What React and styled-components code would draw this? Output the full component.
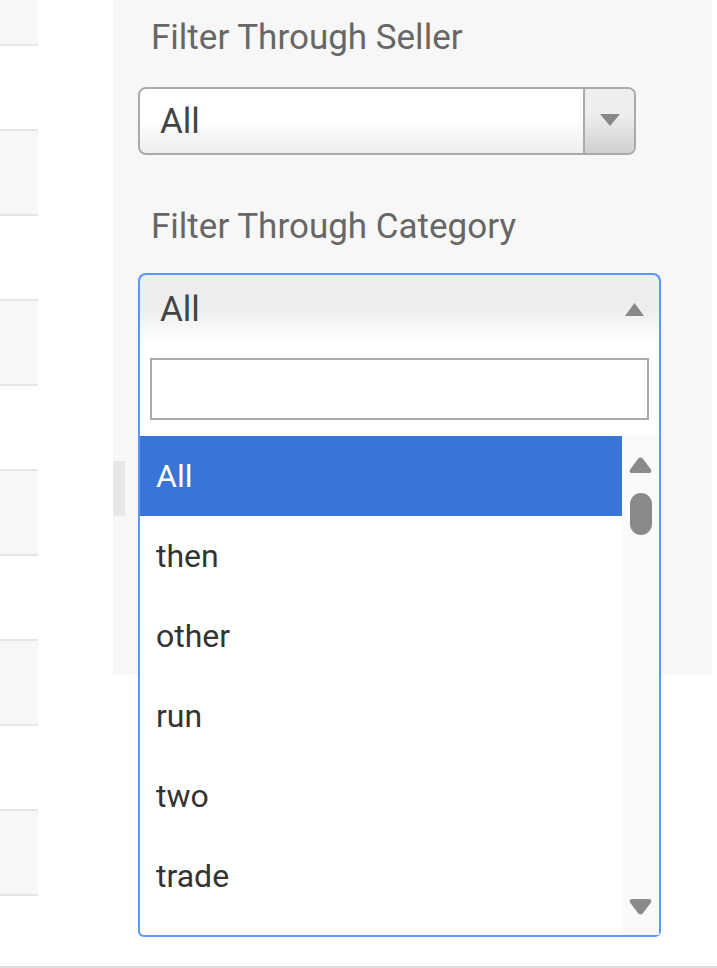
import React from "react";
import styled, { createGlobalStyle } from "styled-components";

const Global = createGlobalStyle`
  html, body { margin: 0; padding: 0; background: #fff; }
  body { font-family: Roboto, "Liberation Sans", Arial, sans-serif; }
  * { box-sizing: border-box; }
`;

const Page = styled.div`
  position: relative;
  width: 717px;
  height: 968px;
  overflow: hidden;
  border-bottom: 2px solid #dedede;
  display: flex;
  align-items: flex-start;
`;

const Strip = styled.div`
  width: 38px;
  display: flex;
  flex-direction: column;
  flex-shrink: 0;
`;

const StripRow = styled.div`
  height: ${(p) => (p.$first ? 46 : 85)}px;
  background: ${(p) => (p.$striped ? "#f7f7f7" : "#fff")};
  border-bottom: 2px solid #e6e6e6;
`;

const Panel = styled.div`
  margin-left: 75px;
  width: 599px;
  height: 675px;
  background: #f7f7f7;
  padding: 18px 0 0 25px;
  display: flex;
  flex-direction: column;
  align-items: flex-start;
`;

const Label = styled.div`
  margin: ${(p) => p.$top || 0}px 0 0 13px;
  font-size: 35px;
  line-height: 40px;
  color: #676767;
`;

const SellerSelect = styled.div`
  margin-top: 29px;
  width: 498px;
  height: 68px;
  border: 2px solid #aaa;
  border-radius: 8px;
  display: flex;
  overflow: hidden;
  background: linear-gradient(to top, #ededed 0%, #fff 50%);
`;

const Value = styled.div`
  flex: 1;
  display: flex;
  align-items: center;
  padding-left: 20px;
  font-size: 35px;
  color: #444;
`;

const ArrowBox = styled.div`
  width: 51px;
  border-left: 2px solid #aaa;
  background: linear-gradient(to top, #d0d0d0 0%, #eee 60%);
  display: flex;
  align-items: center;
  justify-content: center;
  padding-bottom: 2px;
`;

const CategoryWrap = styled.div`
  position: relative;
  margin-top: 26px;
  width: 523px;
`;

const OpenHeader = styled.div`
  height: 70px;
  border: 2px solid #5897fb;
  border-bottom: none;
  border-radius: 8px 8px 0 0;
  background: linear-gradient(to top, #fff 0%, #eee 50%);
  display: flex;
  align-items: center;
  padding-right: 15px;
`;

const Drop = styled.div`
  position: absolute;
  top: 100%;
  left: 0;
  width: 523px;
  background: #fff;
  border: 2px solid #5897fb;
  border-top: none;
  border-radius: 0 0 6px 6px;
  padding-top: 15px;
  z-index: 2;
`;

const Search = styled.div`
  margin: 0 10px;
  height: 62px;
  border: 2px solid #aaa;
  background: #fff;
`;

const List = styled.div`
  margin-top: 16px;
  height: 499px;
  display: flex;
  overflow: hidden;
`;

const Items = styled.div`
  flex: 1;
  display: flex;
  flex-direction: column;
`;

const Item = styled.div`
  height: 80px;
  flex-shrink: 0;
  display: flex;
  align-items: center;
  padding-left: 16px;
  font-size: 32px;
  color: ${(p) => (p.$active ? "#fff" : "#333")};
  background: ${(p) => (p.$active ? "#3875d7" : "transparent")};
`;

const Track = styled.div`
  width: 37px;
  background: #fafafa;
  display: flex;
  flex-direction: column;
  align-items: center;
  padding: 21px 0 20px;
`;

const Thumb = styled.div`
  margin-top: 20px;
  width: 22px;
  height: 42px;
  border-radius: 11px;
  background: #8a8a8a;
`;

const Spacer = styled.div`
  flex: 1;
`;

const Notch = styled.div`
  margin: 118px 0 0 -25px;
  width: 12px;
  height: 55px;
  background: #e8e8e8;
`;

const Tri = ({ dir = "down", w = 20, h = 12, color = "#888" }) => (
  <svg width={w} height={h} viewBox={`0 0 ${w} ${h}`} style={{ display: "block" }}>
    {dir === "down" ? (
      <path d={`M0 0 H${w} L${w / 2} ${h} Z`} fill={color} />
    ) : (
      <path d={`M0 ${h} H${w} L${w / 2} 0 Z`} fill={color} />
    )}
  </svg>
);

const RoundTri = ({ dir = "up" }) => (
  <svg width="23" height="16" viewBox="0 0 23 16" style={{ display: "block" }}>
    {dir === "up" ? (
      <path
        d="M9.3 1.6 Q11.5 -0.6 13.7 1.6 L21.8 12.2 Q23.6 16 19.5 16 H3.5 Q-0.6 16 1.2 12.2 Z"
        fill="#8a8a8a"
      />
    ) : (
      <path
        d="M9.3 14.4 Q11.5 16.6 13.7 14.4 L21.8 3.8 Q23.6 0 19.5 0 H3.5 Q-0.6 0 1.2 3.8 Z"
        fill="#8a8a8a"
      />
    )}
  </svg>
);

const options = ["All", "then", "other", "run", "two", "trade"];

export default function App() {
  const rows = [];
  for (let i = 0; i < 11; i++) {
    rows.push(<StripRow key={i} $first={i === 0} $striped={i % 2 === 0} />);
  }
  return (
    <>
      <Global />
      <Page>
        <Strip>{rows}</Strip>
        <Panel>
          <Label>Filter Through Seller</Label>
          <SellerSelect>
            <Value>All</Value>
            <ArrowBox>
              <Tri dir="down" w={20} h={12} />
            </ArrowBox>
          </SellerSelect>
          <Label $top={52}>Filter Through Category</Label>
          <CategoryWrap>
            <OpenHeader>
              <Value>All</Value>
              <Tri dir="up" w={19} h={13} />
            </OpenHeader>
            <Drop>
              <Search />
              <List>
                <Items>
                  {options.map((o, i) => (
                    <Item key={o} $active={i === 0}>
                      {o}
                    </Item>
                  ))}
                </Items>
                <Track>
                  <RoundTri dir="up" />
                  <Thumb />
                  <Spacer />
                  <RoundTri dir="down" />
                </Track>
              </List>
            </Drop>
          </CategoryWrap>
          <Notch />
        </Panel>
      </Page>
    </>
  );
}
